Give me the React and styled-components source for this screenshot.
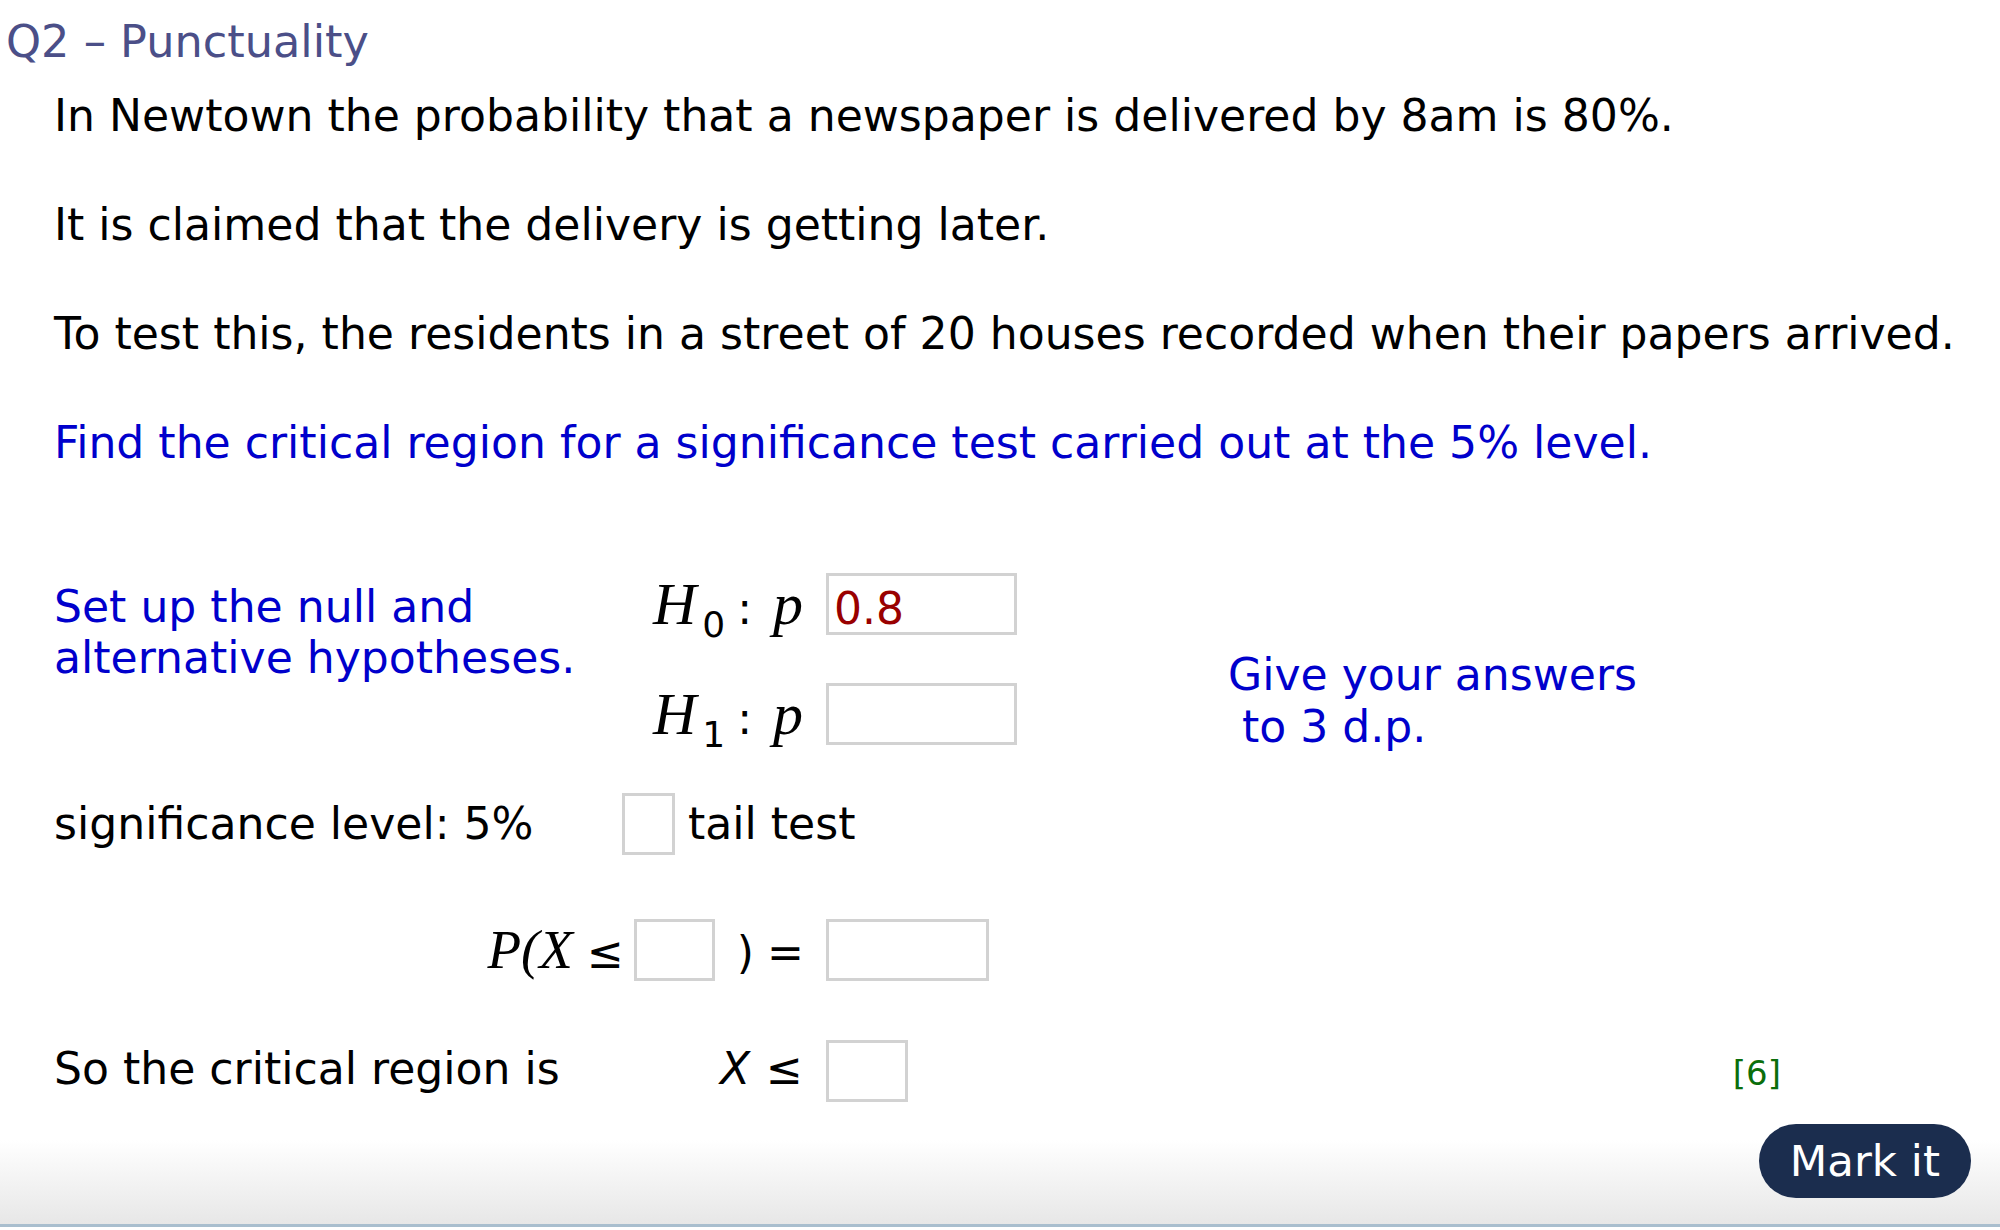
import React from 'react';
import styled, { createGlobalStyle } from 'styled-components';

const GlobalStyle = createGlobalStyle`
    html, body {
        margin: 0;
        padding: 0;
        background: #fff;
    }
    body {
        font-family: "DejaVu Sans", Verdana, sans-serif;
        color: #000;
    }
`;

const Page = styled.div`
    min-height: 1227px;
    padding-top: 12px;
    box-sizing: border-box;
    background: linear-gradient(to bottom, #fff 0, #fff 1140px, #e6e6e6 1227px);
    border-bottom: 3px solid #a9bece;
`;

const Title = styled.h2`
    margin: 0;
    padding-left: 6px;
    font-size: 44.6px;
    font-weight: normal;
    line-height: 60px;
    color: #4b4f88;
`;

const Content = styled.div`
    padding: 0 29px 0 54px;
    font-size: 44.1px;
`;

const Para = styled.p`
    margin: ${(p) => (p.$first ? '14px' : '49px')} 0 0;
    line-height: 60px;
    white-space: nowrap;
    color: ${(p) => (p.$prompt ? '#0000cc' : '#000')};
`;

const HypGrid = styled.div`
    display: grid;
    grid-template-columns: 568px 204px 191px 1fr;
    grid-template-rows: 62px 62px;
    row-gap: 48px;
    margin-top: 100px;
`;

const Prompt = styled.div`
    grid-column: 1;
    grid-row: 1 / 3;
    align-self: start;
    margin-top: 8px;
    line-height: 51px;
    white-space: nowrap;
    color: #0000cc;
`;

const Hint = styled.div`
    grid-column: 4;
    grid-row: 1 / 3;
    align-self: start;
    margin-top: 76px;
    padding-left: 211px;
    line-height: 52px;
    white-space: pre;
    color: #0000cc;
`;

const Row = styled.div`
    display: grid;
    grid-template-columns: 568px 204px 1fr auto;
    height: 62px;
    margin-top: ${(p) => p.$gap}px;
`;

const Label = styled.div`
    grid-column: 1;
    line-height: 62px;
    white-space: nowrap;
`;

const MathCell = styled.div`
    grid-column: ${(p) => p.$cols || '2'};
    grid-row: ${(p) => p.$row || 'auto'};
    display: flex;
    align-items: baseline;
    justify-content: flex-end;
    height: 62px;
    padding-right: ${(p) => p.$pad ?? 23}px;
    white-space: nowrap;
`;

const Italic = styled.span`
    font-family: "Liberation Serif", "Times New Roman", serif;
    font-style: italic;
    font-size: ${(p) => p.$size || 60}px;
    line-height: 62px;
`;

const SansItalic = styled.span`
    font-style: italic;
    font-size: 44px;
    line-height: 62px;
`;

const Sub = styled.span`
    position: relative;
    top: 13px;
    font-size: 36px;
    line-height: 62px;
    margin-left: 6px;
`;

const Op = styled.span`
    line-height: 62px;
    margin-left: ${(p) => p.$before || 0}px;
    margin-right: ${(p) => p.$after || 0}px;
`;

const AnswerBox = styled.input`
    grid-column: ${(p) => p.$col || 'auto'};
    grid-row: ${(p) => p.$row || 'auto'};
    align-self: center;
    box-sizing: border-box;
    width: ${(p) => p.$w}px;
    height: 62px;
    margin: 0;
    padding: 8px 4px 0 5px;
    border: 3px solid #d2d2d2;
    border-radius: 0;
    background: #fff;
    font-family: "DejaVu Sans", Verdana, sans-serif;
    font-size: 44px;
    color: #990000;
    outline: none;
`;

const TailCell = styled.div`
    grid-column: 2 / 5;
    display: flex;
    align-items: center;
    gap: 13px;
    line-height: 62px;
`;

const InlineBox = styled(AnswerBox)`
    margin-left: ${(p) => p.$before || 0}px;
`;

const Marks = styled.div`
    grid-column: 4;
    padding-right: 190px;
    padding-top: 4px;
    font-size: 34px;
    line-height: 62px;
    color: #0b6e0b;
`;

const Footer = styled.div`
    display: flex;
    justify-content: flex-end;
    margin-top: 24px;
`;

const MarkButton = styled.button`
    height: 74px;
    padding: 0 31px;
    border: none;
    border-radius: 37px;
    background: #1b2d4e;
    color: #fff;
    font-family: "DejaVu Sans", Verdana, sans-serif;
    font-size: 43.5px;
    line-height: 74px;
    cursor: pointer;
`;

const Hypothesis = ({ index, row, value }) => (
    <>
        <MathCell $row={row}>
            <Italic>H</Italic>
            <Sub>{index}</Sub>
            <Op $before={12} $after={21}>:</Op>
            <Italic>p</Italic>
        </MathCell>
        <AnswerBox $col={3} $row={row} $w={191} defaultValue={value} readOnly />
    </>
);

const App = () => (
    <Page>
        <GlobalStyle />
        <Title>Q2 – Punctuality</Title>
        <Content>
            <Para $first>In Newtown the probability that a newspaper is delivered by 8am is 80%.</Para>
            <Para>It is claimed that the delivery is getting later.</Para>
            <Para>To test this, the residents in a street of 20 houses recorded when their papers arrived.</Para>
            <Para $prompt>Find the critical region for a significance test carried out at the 5% level.</Para>

            <HypGrid>
                <Prompt>Set up the null and<br />alternative hypotheses.</Prompt>
                <Hypothesis index="0" row={1} value="0.8" />
                <Hypothesis index="1" row={2} value="" />
                <Hint>{'Give your answers\n to 3 d.p.'}</Hint>
            </HypGrid>

            <Row $gap={48}>
                <Label>significance level: 5%</Label>
                <TailCell>
                    <AnswerBox $w={53} readOnly />
                    <span>tail test</span>
                </TailCell>
            </Row>

            <Row $gap={64}>
                <MathCell $cols="1 / 3" $pad={22}>
                    <Italic $size={55}>P(X</Italic>
                    <Op $before={14}>≤</Op>
                    <InlineBox $w={81} $before={10} readOnly />
                    <Op $before={22}>)</Op>
                    <Op $before={13}>=</Op>
                </MathCell>
                <AnswerBox $col={3} $w={163} readOnly />
            </Row>

            <Row $gap={57}>
                <Label>So the critical region is</Label>
                <MathCell>
                    <SansItalic>X</SansItalic>
                    <Op $before={16}>≤</Op>
                </MathCell>
                <AnswerBox $col={3} $w={82} readOnly />
                <Marks>[6]</Marks>
            </Row>

            <Footer>
                <MarkButton>Mark it</MarkButton>
            </Footer>
        </Content>
    </Page>
);

export default App;
